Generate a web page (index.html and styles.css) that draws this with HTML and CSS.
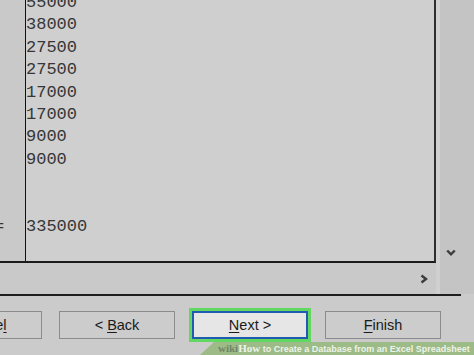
FILE: index.html
```html
<!DOCTYPE html>
<html lang="en">
<head>
  <meta charset="UTF-8" />
  <meta name="viewport" content="width=device-width, initial-scale=1.0"/>
  <title>Import Wizard</title>
  <link rel="stylesheet" href="styles.css">
</head>
<body>

  <div class="window">
    <div class="top">
      <div class="main">
        <div class="grid">
          <div class="gutter">
            <div class="row"></div>
            <div class="row"></div>
            <div class="row"></div>
            <div class="row"></div>
            <div class="row"></div>
            <div class="row"></div>
            <div class="row"></div>
            <div class="row"></div>
            <div class="row"></div>
            <div class="row"></div>
            <div class="row">=</div>
          </div>
          <div class="data">
            <div class="row">55000</div>
            <div class="row">38000</div>
            <div class="row">27500</div>
            <div class="row">27500</div>
            <div class="row">17000</div>
            <div class="row">17000</div>
            <div class="row">9000</div>
            <div class="row">9000</div>
            <div class="row"></div>
            <div class="row"></div>
            <div class="row">335000</div>
          </div>
        </div>
        <div class="hscroll">
          <svg class="arrow" width="8" height="10" viewBox="0 0 8 10">
            <polyline points="1.5,1.5 6,5 1.5,8.5" fill="none" stroke="#3c3c3c" stroke-width="2.4"/>
          </svg>
        </div>
      </div>
      <div class="vscroll">
        <svg class="arrow" width="10" height="7" viewBox="0 0 10 7">
          <polyline points="1.2,1.5 5,5.3 8.8,1.5" fill="none" stroke="#3c3c3c" stroke-width="2.4"/>
        </svg>
      </div>
    </div>

    <div class="divider"></div>

    <div class="buttons">
      <button class="btn">Cance<u>l</u></button>
      <button class="btn">&lt; <u>B</u>ack</button>
      <button class="btn btn-next"><u>N</u>ext &gt;</button>
      <button class="btn"><u>F</u>inish</button>
    </div>
  </div>

  <!-- wikiHow caption strip -->
  <div class="banner">
    <span class="wiki">wiki</span><span class="how">How</span> to Create a Database from an Excel Spreadsheet
  </div>

</body>
</html>
```

FILE: styles.css
```css
* {
  margin: 0;
  padding: 0;
  box-sizing: border-box;
}

body, html {
  width: 474px;
  height: 355px;
  overflow: hidden;
  background-color: #cbcbcb;
}

.window {
  display: flex;
  flex-direction: column;
}

.top {
  display: flex;
  height: 294px;
}

.main {
  width: 436px;
  display: flex;
  flex-direction: column;
}

.grid {
  display: flex;
  height: 263px;
  background-color: #cfcfcf;
  border-right: 2px solid #2e2e2e;
  border-bottom: 2px solid #1a1a1a;
  overflow: hidden;
}

.gutter {
  width: 26px;
  margin-top: -8px;
  background-color: #c9c9c9;
  border-right: 1px solid #111;
  overflow: hidden;
}

.gutter .row {
  text-indent: -6px;
}

.data {
  flex: 1;
  margin-top: -8px;
}

.row {
  height: 22.4px;
  line-height: 22.4px;
  font-family: "Liberation Mono", "Courier New", monospace;
  font-size: 17px;
  color: #363636;
  white-space: nowrap;
}

.hscroll {
  height: 31px;
  display: flex;
  align-items: center;
  justify-content: flex-end;
  padding-right: 8px;
  background-color: #c9c9c9;
}

.arrow {
  display: block;
}

.vscroll {
  width: 38px;
  display: flex;
  flex-direction: column;
  justify-content: flex-end;
  padding-left: 6px;
  padding-bottom: 38px;
  background-color: #c4c4c4;
  border-left: 4px solid #d0d0d0;
}

.divider {
  width: 461px;
  height: 2px;
  background-color: #1e1e1e;
}

.buttons {
  display: flex;
  gap: 17px;
  margin-left: -74px;
  padding-top: 15px;
}

.btn {
  flex: none;
  width: 116px;
  height: 28px;
  background-color: #cccccc;
  border: 1px solid #8c8c8c;
  font-family: "Liberation Sans", Arial, sans-serif;
  font-size: 14.5px;
  color: #1a1a1a;
}

.btn u {
  text-underline-offset: 2px;
}

.btn-next {
  background-color: #e6e6e6;
  border: 2px solid #1f5bb0;
  outline: 3px solid #62d862;
}

.banner {
  position: absolute;
  left: 200px;
  right: 0;
  bottom: 0;
  height: 13px;
  padding-left: 18px;
  background-color: #9cbb86;
  clip-path: polygon(14px 0, 100% 0, 100% 100%, 0 100%);
  font-family: "Liberation Sans", Arial, sans-serif;
  font-size: 9px;
  font-weight: bold;
  line-height: 13px;
  color: #eef3ea;
  white-space: nowrap;
}

.wiki,
.how {
  font-family: "Liberation Serif", Georgia, serif;
  font-size: 11px;
}

.wiki {
  color: #718369;
}
```
